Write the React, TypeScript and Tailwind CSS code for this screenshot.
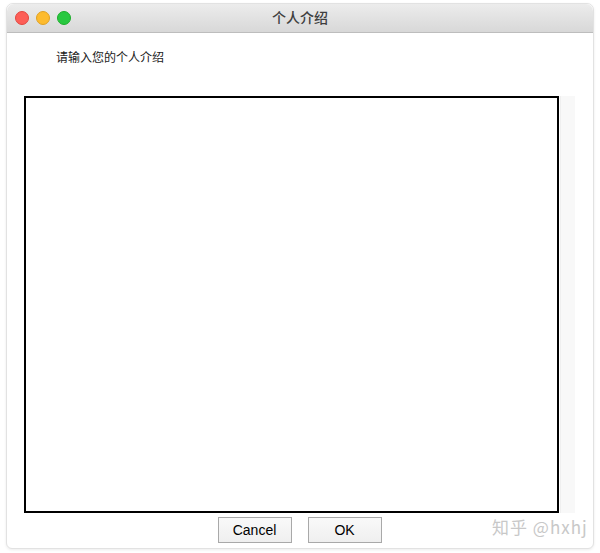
import React from "react";

export default function App() {
  const font = { fontFamily: '"Liberation Sans", "Noto Sans CJK SC", Arial, sans-serif' };
  return (
    <div className="relative w-[600px] h-[553px] bg-white overflow-hidden" style={font}>
      <div className="absolute left-[6px] top-[3px] w-[588px] h-[546px] rounded-t-[7px] rounded-b-[6px] border border-[#e2e2e2] bg-white flex flex-col shadow-[0_1px_3px_rgba(0,0,0,0.08)]">
        <div className="relative h-[29px] shrink-0 rounded-t-[7px] bg-gradient-to-b from-[#ececec] to-[#d8d8d8] border-b border-[#bdbdbd] flex items-center">
          <div className="flex items-center gap-[7px] pl-[8px]">
            <span className="w-[14px] h-[14px] rounded-full bg-[#fd5e57] border border-[#e2463f]" />
            <span className="w-[14px] h-[14px] rounded-full bg-[#fdbb2e] border border-[#e0a123]" />
            <span className="w-[14px] h-[14px] rounded-full bg-[#28c840] border border-[#1dad2b]" />
          </div>
          <div className="absolute inset-0 flex items-center justify-center text-[14px] font-medium text-[#3f3f3f]">
            个人介绍
          </div>
        </div>
        <div className="pl-[49px] pt-[17px] text-[12px] text-[#1a1a1a] leading-[16px]">请输入您的个人介绍</div>
        <div className="flex pl-[17px] mt-[30px]">
          <div className="w-[535px] h-[417px] border-2 border-black bg-white" />
          <div className="ml-[1px] w-[15px] h-[417px] bg-[#f8f8f8] border-l border-[#efefef]" />
        </div>
        <div className="flex justify-center gap-[16px] mt-[4px] pr-[1px]">
          <button className="w-[74px] h-[26px] border border-[#a9a9a9] bg-gradient-to-b from-[#f9f9f9] to-[#efefef] text-[14px] text-black">
            Cancel
          </button>
          <button className="w-[74px] h-[26px] border border-[#a9a9a9] bg-gradient-to-b from-[#f9f9f9] to-[#efefef] text-[14px] text-black">
            OK
          </button>
        </div>
      </div>
      <div className="absolute left-[492px] top-[514px] text-[17px] tracking-[1px] text-[#c8c8c8] whitespace-nowrap" style={{ fontFamily: '"Noto Sans CJK SC", "Liberation Sans", sans-serif' }}>
        知乎 @hxhj
      </div>
    </div>
  );
}
